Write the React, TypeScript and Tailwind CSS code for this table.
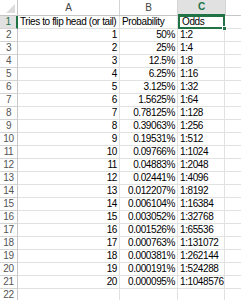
import React from "react";

const rows: [string, string, string, string][] = [
  ["1", "Tries to flip head (or tail)", "Probability", "Odds"],
  ["2", "1", "50%", "1:2"],
  ["3", "2", "25%", "1:4"],
  ["4", "3", "12.5%", "1:8"],
  ["5", "4", "6.25%", "1:16"],
  ["6", "5", "3.125%", "1:32"],
  ["7", "6", "1.5625%", "1:64"],
  ["8", "7", "0.78125%", "1:128"],
  ["9", "8", "0.39063%", "1:256"],
  ["10", "9", "0.19531%", "1:512"],
  ["11", "10", "0.09766%", "1:1024"],
  ["12", "11", "0.04883%", "1:2048"],
  ["13", "12", "0.02441%", "1:4096"],
  ["14", "13", "0.012207%", "1:8192"],
  ["15", "14", "0.006104%", "1:16384"],
  ["16", "15", "0.003052%", "1:32768"],
  ["17", "16", "0.001526%", "1:65536"],
  ["18", "17", "0.000763%", "1:131072"],
  ["19", "18", "0.000381%", "1:262144"],
  ["20", "19", "0.000191%", "1:524288"],
  ["21", "20", "0.000095%", "1:1048576"],
  ["22", "", "", ""],
];

const cols = "grid grid-cols-[18px_102px_58px_47px_1fr]";

export default function App() {
  return (
    <div className="w-[241px] h-[300px] overflow-hidden bg-white text-[10px] tracking-[-0.4px] leading-none text-black font-['Liberation_Sans',sans-serif]">
      {/* column headers */}
      <div className={`${cols} h-[16px] border-b border-[#c6c6c6] text-[#444]`}>
        <div className="relative border-r border-[#c6c6c6]">
          <div className="absolute right-[2px] bottom-[2px] w-0 h-0 border-l-[9px] border-l-transparent border-b-[9px] border-b-[#dcdcdc]" />
        </div>
        <div className="flex items-center justify-center border-r border-[#d4d4d4]">A</div>
        <div className="flex items-center justify-center border-r border-[#d4d4d4]">B</div>
        <div className="flex items-center justify-center bg-[#e1e1e1] text-[#217346] font-bold border-b-2 border-[#217346] -mb-px">C</div>
        <div className="border-l border-[#d4d4d4]" />
      </div>

      {rows.map((r, i) => (
        <div key={r[0]} className={`${cols} h-[13px]`}>
          <div
            className={`flex items-center justify-center border-b border-[#d4d4d4] ${
              i === 0
                ? "bg-[#e1e1e1] text-[#217346] border-r-2 border-r-[#217346]"
                : "text-[#555] border-r border-r-[#c6c6c6]"
            }`}
          >
            {r[0]}
          </div>
          <div className={`flex items-center px-[2px] whitespace-nowrap overflow-visible border-r border-b border-[#e1e1e1] ${i === 0 ? "justify-start" : "justify-end"}`}>
            {r[1]}
          </div>
          <div className={`flex items-center px-[2px] whitespace-nowrap border-r border-b border-[#e1e1e1] ${i === 0 ? "justify-start" : "justify-end"}`}>
            {r[2]}
          </div>
          {i === 0 ? (
            <div className="relative flex items-center px-[2px] border-2 border-[#217346] -mt-px">
              {r[3]}
              <div className="absolute -right-[4px] -bottom-[4px] w-[5px] h-[5px] bg-[#217346] border border-white" />
            </div>
          ) : (
            <div className="flex items-center px-[2px] whitespace-nowrap border-r border-b border-[#e1e1e1]">{r[3]}</div>
          )}
          <div className="border-b border-[#e1e1e1]" />
        </div>
      ))}
    </div>
  );
}
